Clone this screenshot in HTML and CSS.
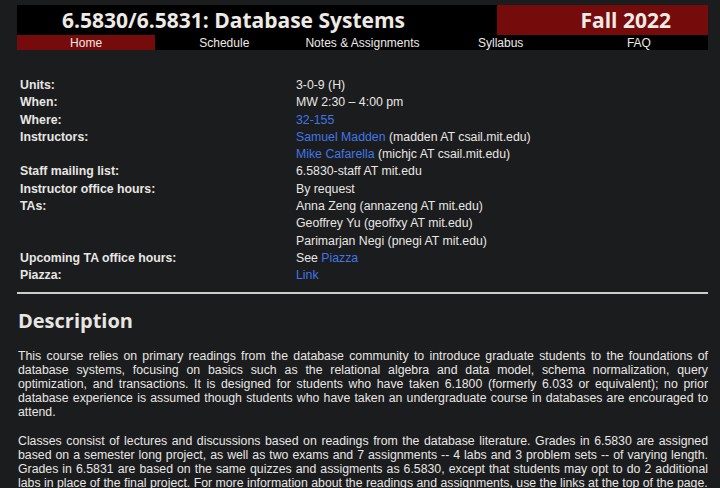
FILE: index.html
```html
<!DOCTYPE html>
<html>
<head>
<meta charset="utf-8">
<link rel="stylesheet" href="styles.css">
</head>
<body>
<div class="page">
  <header class="banner">
    <div class="title-row">
      <div class="title">6.5830/6.5831: Database Systems</div>
      <div class="term">Fall 2022</div>
    </div>
    <nav class="nav">
      <a class="nav-item active">Home</a>
      <a class="nav-item">Schedule</a>
      <a class="nav-item">Notes &amp; Assignments</a>
      <a class="nav-item">Syllabus</a>
      <a class="nav-item">FAQ</a>
    </nav>
  </header>

  <table class="info">
    <tr><td class="label">Units:</td><td>3-0-9 (H)</td></tr>
    <tr><td class="label">When:</td><td>MW 2:30 – 4:00 pm</td></tr>
    <tr><td class="label">Where:</td><td><a class="link">32-155</a></td></tr>
    <tr><td class="label">Instructors:</td><td><a class="link">Samuel Madden</a> (madden AT csail.mit.edu)</td></tr>
    <tr><td class="label"></td><td><a class="link">Mike Cafarella</a> (michjc AT csail.mit.edu)</td></tr>
    <tr><td class="label">Staff mailing list:</td><td>6.5830-staff AT mit.edu</td></tr>
    <tr><td class="label">Instructor office hours:</td><td>By request</td></tr>
    <tr><td class="label">TAs:</td><td>Anna Zeng (annazeng AT mit.edu)</td></tr>
    <tr><td class="label"></td><td>Geoffrey Yu (geoffxy AT mit.edu)</td></tr>
    <tr><td class="label"></td><td>Parimarjan Negi (pnegi AT mit.edu)</td></tr>
    <tr><td class="label">Upcoming TA office hours:</td><td>See <a class="link">Piazza</a></td></tr>
    <tr><td class="label">Piazza:</td><td><a class="link">Link</a></td></tr>
  </table>

  <hr class="rule">

  <h2 class="heading">Description</h2>

  <p class="para">This course relies on primary readings from the database community to introduce graduate students to the foundations of database systems, focusing on basics such as the relational algebra and data model, schema normalization, query optimization, and transactions. It is designed for students who have taken 6.1800 (formerly 6.033 or equivalent); no prior database experience is assumed though students who have taken an undergraduate course in databases are encouraged to attend.</p>

  <p class="para">Classes consist of lectures and discussions based on readings from the database literature. Grades in 6.5830 are assigned based on a semester long project, as well as two exams and 7 assignments -- 4 labs and 3 problem sets -- of varying length. Grades in 6.5831 are based on the same quizzes and assigments as 6.5830, except that students may opt to do 2 additional labs in place of the final project. For more information about the readings and assignments, use the links at the top of the page.</p>
</div>
</body>
</html>
```

FILE: styles.css
```css
html, body {
  margin: 0;
  padding: 0;
  background: #1b1c1e;
  color: #e8e6e3;
  font-family: "Liberation Sans", Arial, sans-serif;
  font-size: 12.3px;
}

.page {
  margin: 5px 12px 0 17px;
}

.banner {
  background: #000;
  color: #eeeae6;
}

.title-row {
  display: flex;
  height: 30px;
}

.title {
  width: 435px;
  padding-left: 45px;
  font-family: "Open Sans", sans-serif;
  font-weight: bold;
  font-size: 21px;
  line-height: 30px;
  white-space: nowrap;
}

.term {
  flex: 1;
  background: #760b0b;
  text-align: right;
  padding-right: 37px;
  font-family: "Open Sans", sans-serif;
  font-weight: bold;
  font-size: 21px;
  line-height: 30px;
}

.nav {
  display: grid;
  grid-template-columns: repeat(5, 1fr);
  height: 15px;
}

.nav-item {
  text-align: center;
  font-size: 12px;
  line-height: 17px;
  height: 15px;
  overflow: hidden;
  color: #eeeae6;
}

.nav-item.active {
  background: #760b0b;
}

.info {
  margin-top: 27px;
  border-collapse: collapse;
}

.info td {
  padding: 1px 3px;
  line-height: 15.3px;
  vertical-align: top;
}

.info td.label {
  width: 270px;
  font-weight: bold;
}

.link {
  color: #4276e4;
}

.rule {
  margin: 7px 0 0 0;
  border: 0;
  height: 2px;
  background: #cfcdca;
}

.heading {
  font-family: "Open Sans", sans-serif;
  font-weight: bold;
  font-size: 20px;
  line-height: 26px;
  margin: 14px 0 0 1px;
}

.para {
  margin: 15px 0 0 1px;
  line-height: 14px;
  text-align: justify;
}
```
